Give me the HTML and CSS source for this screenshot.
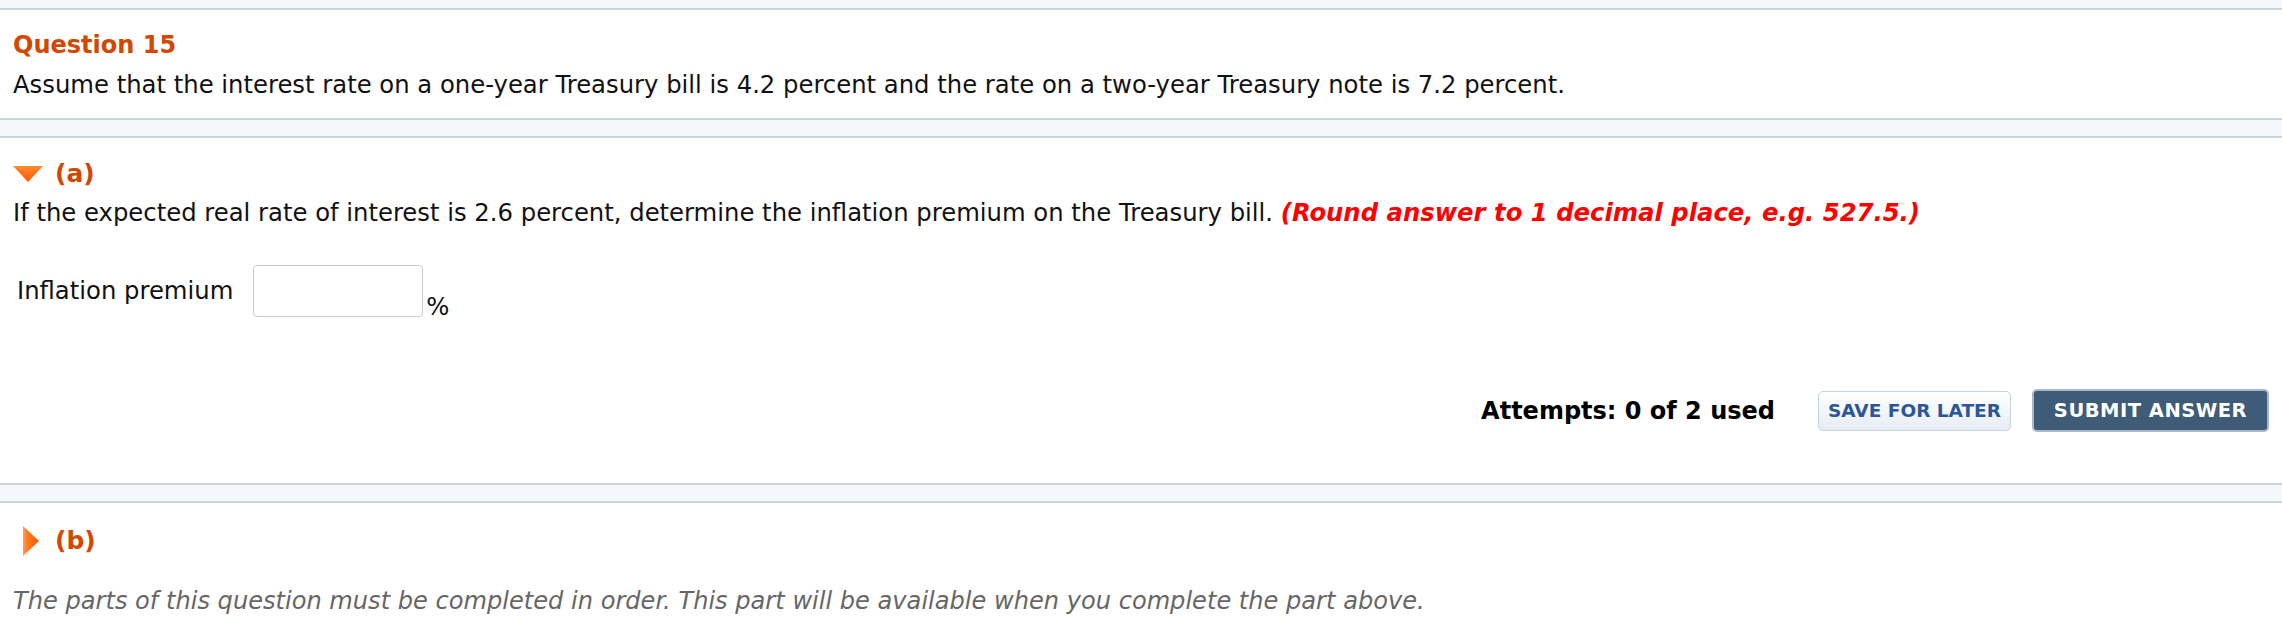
FILE: index.html
```html
<!DOCTYPE html>
<html lang="en">
<head>
<meta charset="utf-8">
<title>Question 15</title>
<link rel="stylesheet" href="styles.css">
</head>
<body>
<div class="band band-top"></div>
<section class="question">
  <h2 class="q-title">Question 15</h2>
  <p class="q-text">Assume that the interest rate on a one-year Treasury bill is 4.2 percent and the rate on a two-year Treasury note is 7.2 percent.</p>
</section>
<div class="band"></div>
<section class="part part-a">
  <div class="part-head">
    <svg class="tri-down" width="30" height="16" viewBox="0 0 30 16">
      <defs>
        <linearGradient id="gd" x1="0" y1="0" x2="0" y2="1">
          <stop offset="0" stop-color="#ff8a2e"/>
          <stop offset="1" stop-color="#ff5a00"/>
        </linearGradient>
      </defs>
      <polygon points="0,0 30,0 15,16" fill="url(#gd)"/>
    </svg>
    <span class="part-label">(a)</span>
  </div>
  <p class="part-text">If the expected real rate of interest is 2.6 percent, determine the inflation premium on the Treasury bill. <em class="hint">(Round answer to 1 decimal place, e.g. 527.5.)</em></p>
  <div class="answer-row">
    <span class="answer-label">Inflation premium</span>
    <input class="answer-input" type="text" aria-label="Inflation premium">
    <span class="unit">%</span>
  </div>
  <div class="actions">
    <span class="attempts">Attempts: 0 of 2 used</span>
    <button class="btn btn-save" type="button">SAVE FOR LATER</button>
    <button class="btn btn-submit" type="button">SUBMIT ANSWER</button>
  </div>
</section>
<div class="band"></div>
<section class="part part-b">
  <div class="part-head">
    <svg class="tri-right" width="16" height="30" viewBox="0 0 16 30">
      <defs>
        <linearGradient id="gr" x1="0" y1="0" x2="1" y2="0">
          <stop offset="0" stop-color="#ffa060"/>
          <stop offset="0.3" stop-color="#ff7a1a"/>
          <stop offset="1" stop-color="#ff5a00"/>
        </linearGradient>
      </defs>
      <polygon points="0,0 16,15 0,30" fill="url(#gr)"/>
    </svg>
    <span class="part-label">(b)</span>
  </div>
  <p class="locked">The parts of this question must be completed in order. This part will be available when you complete the part above.</p>
</section>
</body>
</html>
```

FILE: styles.css
```css
html, body {
  margin: 0;
  padding: 0;
  background: #ffffff;
}
body {
  font-family: "DejaVu Sans", Verdana, sans-serif;
  font-size: 24.3px;
  color: #111111;
}
.band {
  height: 16px;
  background: #f4f8fb;
  border-top: 2px solid #cbd4e1;
  border-bottom: 2px solid #cbd4e1;
}
.band-top {
  height: 8px;
  border-top: none;
}
.question {
  padding: 20px 13px 18px 13px;
}
.q-title {
  margin: 0;
  font-size: 24px;
  line-height: 30px;
  font-weight: bold;
  color: #d34800;
}
.q-text {
  margin: 10px 0 0 0;
  line-height: 30px;
}
.part {
  padding: 21px 13px 0 13px;
}
.part-a {
  height: 345px;
  box-sizing: border-box;
}
.part-head {
  display: flex;
  align-items: center;
  gap: 12px;
  height: 30px;
}
.part-label {
  font-size: 25px;
  line-height: 30px;
  font-weight: bold;
  color: #d34800;
}
.tri-down {
  display: block;
}
.tri-right {
  display: block;
  margin-left: 10px;
  margin-right: 4px;
}
.part-text {
  margin: 9px 0 0 0;
  line-height: 30px;
}
.hint {
  color: #ff0000;
  font-weight: bold;
  font-style: italic;
}
.answer-row {
  display: flex;
  align-items: center;
  margin-top: 37px;
  padding-left: 4px;
}
.answer-label {
  line-height: 30px;
}
.answer-input {
  width: 170px;
  height: 52px;
  box-sizing: border-box;
  margin: 0 0 0 20px;
  border: 1.5px solid #cccccc;
  border-radius: 4px;
  background: #ffffff;
  font: inherit;
  padding: 0 8px;
}
.unit {
  align-self: flex-end;
  line-height: 20px;
  margin-left: 3px;
}
.actions {
  display: flex;
  justify-content: flex-end;
  align-items: center;
  margin-top: 72px;
}
.attempts {
  font-weight: bold;
  font-size: 24px;
  color: #000000;
  margin-right: 43px;
}
.btn {
  font-family: "DejaVu Sans", Verdana, sans-serif;
  font-weight: bold;
  border-radius: 5px;
  cursor: pointer;
  padding: 0;
}
.btn-save {
  font-size: 18.5px;
  height: 40px;
  width: 193px;
  color: #2b5797;
  background: linear-gradient(#ffffff, #e7edf4);
  border: 1.5px solid #c6d2e0;
  margin-right: 21px;
}
.btn-submit {
  font-size: 19.5px;
  letter-spacing: 0.5px;
  height: 43px;
  width: 237px;
  color: #ffffff;
  background: #3e5b78;
  border: 2px solid #a9b8c9;
}
.part-b {
  padding-top: 23px;
}
.locked {
  margin: 30px 0 0 0;
  line-height: 30px;
  font-size: 24.1px;
  font-style: italic;
  color: #666666;
}
```
